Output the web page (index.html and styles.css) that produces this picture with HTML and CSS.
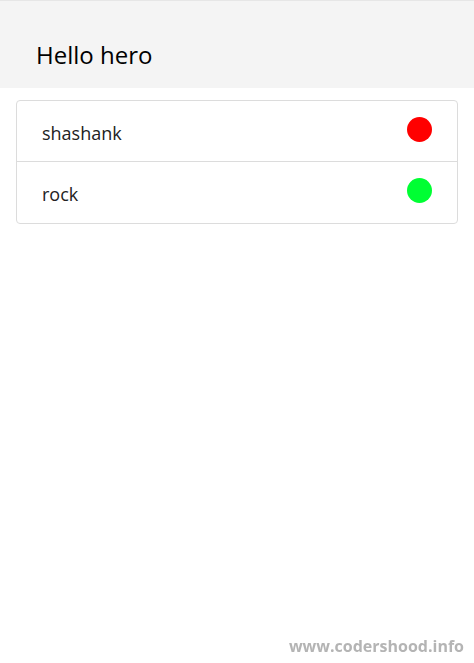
FILE: index.html
```html
<!DOCTYPE html>
<html>
<head>
<meta charset="utf-8">
<link rel="stylesheet" href="styles.css">
</head>
<body>
<header class="toolbar">
  <h1 class="title">Hello hero</h1>
</header>
<main class="content">
  <ul class="list">
    <li class="item"><span class="name">shashank</span><span class="dot dot-red"></span></li>
    <li class="item"><span class="name">rock</span><span class="dot dot-green"></span></li>
  </ul>
</main>
<div class="watermark">www.codershood.info</div>
</body>
</html>
```
FILE: styles.css
```css
html, body {
  margin: 0;
  padding: 0;
  background: #ffffff;
  font-family: "Open Sans", "Noto Sans", sans-serif;
}
.toolbar {
  border-top: 1px solid #e6e6e6;
  background: #f4f4f4;
  height: 88px;
  display: flex;
  align-items: flex-end;
  padding: 0 0 0 36px;
  box-sizing: border-box;
}
.title {
  margin: 0 0 16px 0;
  font-size: 24px;
  font-weight: 400;
  color: #000;
  line-height: 34px;
}
.content {
  padding: 12px 16px 0 16px;
}
.list {
  list-style: none;
  margin: 0;
  padding: 0;
  border: 1px solid #dcdcdc;
  border-radius: 4px;
}
.item {
  height: 60px;
  display: flex;
  align-items: center;
  justify-content: space-between;
  padding: 0 25px 0 25px;
}
.item + .item {
  border-top: 1px solid #dcdcdc;
  padding-bottom: 1px;
}
.name {
  font-size: 18px;
  color: #222;
  padding-top: 4px;
}
.dot {
  width: 25px;
  height: 25px;
  border-radius: 50%;
  display: block;
  margin-bottom: 4px;
}
.dot-red { background: #ff0000; }
.dot-green { background: #00ff33; }
.watermark {
  position: fixed;
  right: 10px;
  bottom: 6px;
  font-size: 16px;
  font-weight: 700;
  color: #b4b4b4;
}
```
